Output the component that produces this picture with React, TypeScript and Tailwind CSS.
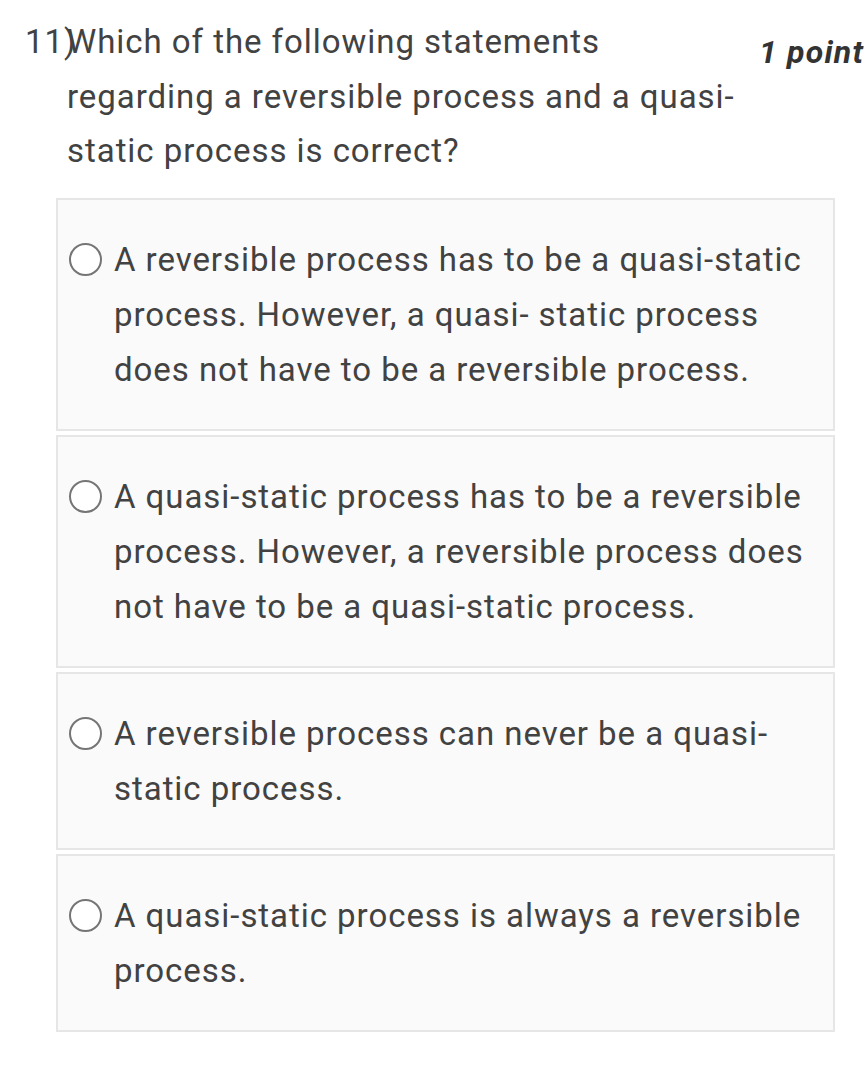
const options = [
  'A reversible process has to be a quasi-static process. However, a quasi- static process does not have to be a reversible process.',
  'A quasi-static process has to be a reversible process. However, a reversible process does not have to be a quasi-static process.',
  'A reversible process can never be a quasi- static process.',
  'A quasi-static process is always a reversible process.',
]

function Option({ text }: { text: string }) {
  return (
    <label className="flex items-start border-2 border-[#e6e6e6] bg-[#fafafa] py-[32px] pl-[11px] pr-[14px]">
      <span className="mt-[11px] h-[33px] w-[33px] shrink-0 rounded-full border-2 border-[#757575] bg-white" />
      <span className="ml-[12px] w-[698px] text-[33px] leading-[55px] tracking-[0.95px] text-[#424242]">{text}</span>
    </label>
  )
}

export default function App() {
  return (
    <div
      className="relative h-[1074px] w-[865px] overflow-hidden bg-white"
      style={{ fontFamily: 'Roboto, "Noto Sans", sans-serif' }}
    >
      <div className="flex pl-[25px] pt-[15px]">
        <span className="w-[42px] shrink-0 text-[33px] leading-[54.5px] tracking-[0.95px] text-[#424242]">11)</span>
        <div className="w-[676px] shrink-0 text-[33px] leading-[54.5px] tracking-[0.95px] text-[#424242]">
          Which of the following statements regarding a reversible process and a quasi- static process is correct?
        </div>
        <span className="ml-[16px] mt-[10px] shrink-0 whitespace-nowrap text-[32px] font-bold italic leading-[54.5px] tracking-[1.2px] text-[#333333]">
          1 point
        </span>
      </div>

      <div className="mt-[19px] ml-[56px] flex w-[779px] flex-col gap-[4px]">
        {options.map((o) => (
          <Option key={o} text={o} />
        ))}
      </div>
    </div>
  )
}
